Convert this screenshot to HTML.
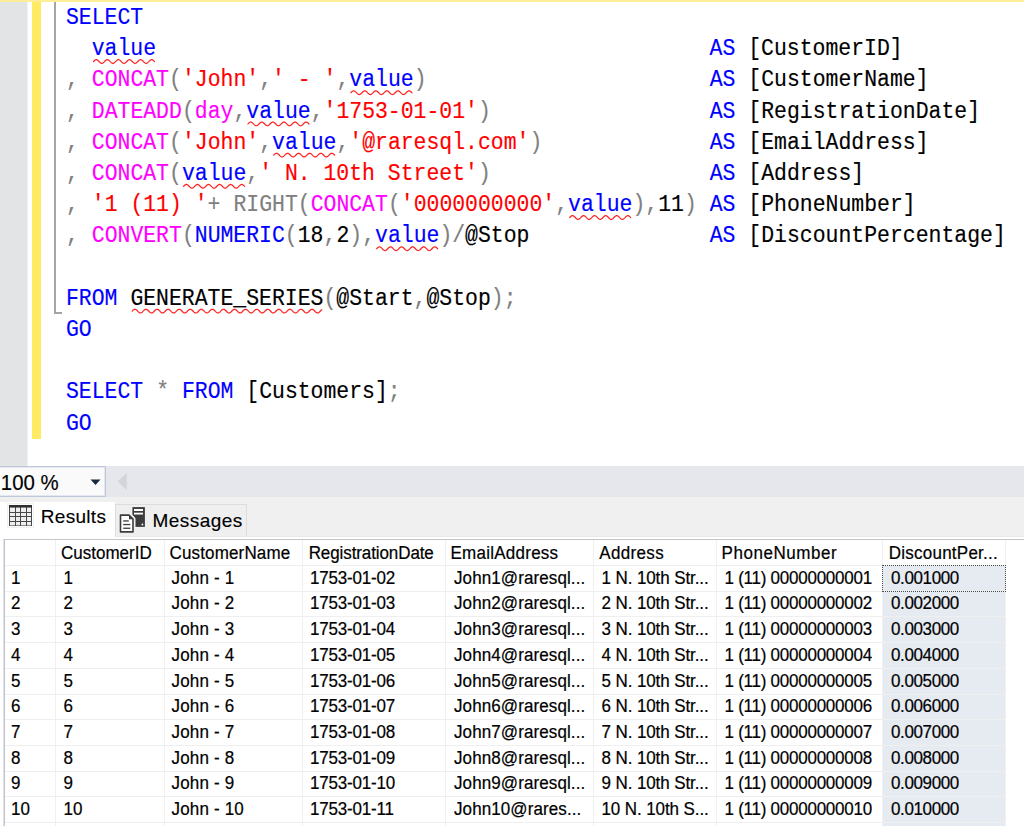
<!DOCTYPE html>
<html><head><meta charset="utf-8">
<style>
*{margin:0;padding:0;box-sizing:border-box}
html,body{width:1024px;height:826px;overflow:hidden;background:#fff}
body{position:relative;font-family:"Liberation Sans",sans-serif}
.abs{position:absolute}
#margin{left:0;top:0;width:27px;height:466px;background:#e3e4e6}
#topstrip{left:0;top:0;width:1024px;height:2px;background:#ffed97}
#ybar{left:32px;top:2px;width:9px;height:437px;background:#ffea64}
#vline{left:54px;top:2px;width:2px;height:312px;background:#a5a5a5}
#hline{left:54px;top:312px;width:8px;height:2px;background:#a5a5a5}
#code{left:66px;top:2.9px;font-family:"Liberation Mono",monospace;font-size:23px;line-height:31.2px;white-space:pre;color:#000;transform:scaleX(0.9326);transform-origin:0 0;-webkit-text-stroke:0.15px currentColor}
.k{color:#0000ff}.f{color:#ff00ff}.s{color:#ff0000}.g{color:#808080}


#band{left:0;top:466px;width:1024px;height:31px;background:#e6e7ec}
#zoombox{left:-1px;top:466px;width:107px;height:31px;background:#fafafa;border:1px solid #bfc8da;box-shadow:inset 0 1px 0 #e3e7ef,inset 0 -1px 0 #e3e7ef,inset -1px 0 0 #e3e7ef}
#zoomtxt{left:0.8px;top:470.6px;transform:scaleY(1.04);transform-origin:0 19px;-webkit-text-stroke:0.15px #000;font-size:20.4px;line-height:24px;color:#000}
#lower{left:0;top:497px;width:1024px;height:329px;background:#f0f0f0}
#restab{left:0;top:502px;width:115px;height:37px;background:#fff}
#msgtab{left:115px;top:504px;width:132px;height:33px;background:#efefef;border:1px solid #dcdcdc;border-bottom:none}
#gridbg{left:0px;top:537px;width:1024px;height:289px;background:#fff}
#restxt{left:40.8px;top:504.8px;-webkit-text-stroke:0.15px #000;font-size:19px;line-height:24px;letter-spacing:0.3px;color:#000}
#msgtxt{left:152.5px;top:508.5px;-webkit-text-stroke:0.15px #000;font-size:19px;line-height:24px;letter-spacing:0.45px;color:#000}
.gt{position:absolute;font-size:17px;line-height:20px;color:#000;white-space:pre;transform:scaleY(1.06);transform-origin:0 15.9px;-webkit-text-stroke:0.2px #000}
.vl{position:absolute;width:1px;background:#f0f0f0}
.hl{position:absolute;height:1px;background:#efefef}
</style></head><body>
<div id="margin" class="abs"></div>
<div class="abs" style="left:27px;top:2px;width:1px;height:464px;background:#f0f1f2"></div>
<div id="topstrip" class="abs"></div>
<div id="ybar" class="abs"></div>
<div id="vline" class="abs"></div>
<div id="hline" class="abs"></div>
<div id="code" class="abs"><span class="k">SELECT</span>
  <span class="k sq">value</span>                                           <span class="k">AS</span> [CustomerID]
<span class="g">,</span> <span class="f">CONCAT</span><span class="g">(</span><span class="s">'John'</span><span class="g">,</span><span class="s">' - '</span><span class="g">,</span><span class="k sq">value</span><span class="g">)</span>                      <span class="k">AS</span> [CustomerName]
<span class="g">,</span> <span class="f">DATEADD</span><span class="g">(</span><span class="f">day</span><span class="g">,</span><span class="k sq">value</span><span class="g">,</span><span class="s">'1753-01-01'</span><span class="g">)</span>                 <span class="k">AS</span> [RegistrationDate]
<span class="g">,</span> <span class="f">CONCAT</span><span class="g">(</span><span class="s">'John'</span><span class="g">,</span><span class="k sq">value</span><span class="g">,</span><span class="s">'@raresql.com'</span><span class="g">)</span>             <span class="k">AS</span> [EmailAddress]
<span class="g">,</span> <span class="f">CONCAT</span><span class="g">(</span><span class="k sq">value</span><span class="g">,</span><span class="s">' N. 10th Street'</span><span class="g">)</span>                 <span class="k">AS</span> [Address]
<span class="g">,</span> <span class="s">'1 (11) '</span><span class="g">+</span> <span class="g">RIGHT(</span><span class="f">CONCAT</span><span class="g">(</span><span class="s">'0000000000'</span><span class="g">,</span><span class="k sq">value</span><span class="g">),</span>11<span class="g">)</span> <span class="k">AS</span> [PhoneNumber]
<span class="g">,</span> <span class="f">CONVERT</span><span class="g">(</span><span class="k">NUMERIC</span><span class="g">(</span>18<span class="g">,</span>2<span class="g">),</span><span class="k sq">value</span><span class="g">)/</span>@Stop              <span class="k">AS</span> [DiscountPercentage]

<span class="k">FROM</span> <span class="sq">GENERATE_SERIES</span><span class="g">(</span>@Start<span class="g">,</span>@Stop<span class="g">);</span>
<span class="k">GO</span>

<span class="k">SELECT</span> <span class="g">*</span> <span class="k">FROM</span> [Customers]<span class="g">;</span>
<span class="k">GO</span></div>
<svg class="abs" style="left:0;top:0" width="1024" height="466"><g fill="none" stroke="#ff2424" stroke-width="1.25" stroke-linecap="round" stroke-linejoin="round"><polyline points="93.54,61.50 94.04,60.98 94.54,60.51 95.04,60.11 95.54,59.82 96.04,59.67 96.54,59.67 97.04,59.81 97.54,60.08 98.04,60.47 98.54,60.95 99.04,61.46 99.54,61.98 100.04,62.46 100.54,62.87 101.04,63.16 101.54,63.32 102.04,63.34 102.54,63.21 103.04,62.94 103.54,62.56 104.04,62.09 104.54,61.57 105.04,61.05 105.54,60.57 106.04,60.16 106.54,59.86 107.04,59.68 107.54,59.66 108.04,59.78 108.54,60.04 109.04,60.41 109.54,60.88 110.04,61.39 110.54,61.91 111.04,62.40 111.54,62.82 112.04,63.13 112.54,63.31 113.04,63.35 113.54,63.23 114.04,62.98 114.54,62.62 115.04,62.16 115.54,61.65 116.04,61.12 116.54,60.63 117.04,60.21 117.54,59.89 118.04,59.70 118.54,59.65 119.04,59.75 119.54,59.99 120.04,60.36 120.54,60.81 121.04,61.32 121.54,61.84 122.04,62.33 122.54,62.76 123.04,63.09 123.54,63.29 124.04,63.35 124.54,63.26 125.04,63.03 125.54,62.67 126.04,62.23 126.54,61.72 127.04,61.20 127.54,60.70 128.04,60.26 128.54,59.93 129.04,59.72 129.54,59.65 130.04,59.73 130.54,59.95 131.04,60.30 131.54,60.74 132.04,61.24 132.54,61.77 133.04,62.27 133.54,62.71 134.04,63.05 134.54,63.27 135.04,63.35 135.54,63.28 136.04,63.07 136.54,62.73 137.04,62.29 137.54,61.79 138.04,61.27 138.54,60.76 139.04,60.32 139.54,59.97 140.04,59.74 140.54,59.65 141.04,59.71 141.54,59.91 142.04,60.24 142.54,60.67 143.04,61.17 143.54,61.69 144.04,62.20 144.54,62.65 145.04,63.01 145.54,63.25 146.04,63.35 146.54,63.30 147.04,63.10 147.54,62.78 148.04,62.36 148.54,61.87 149.04,61.34 149.54,60.83 150.04,60.38 150.54,60.01 151.04,59.76 151.54,59.65 152.04,59.69 152.54,59.88 153.04,60.19 153.54,60.61 154.04,61.10 154.49,61.57"/><polyline points="350.94,92.70 351.44,92.18 351.94,91.71 352.44,91.31 352.94,91.02 353.44,90.87 353.94,90.87 354.44,91.01 354.94,91.28 355.44,91.67 355.94,92.15 356.44,92.66 356.94,93.18 357.44,93.66 357.94,94.07 358.44,94.36 358.94,94.52 359.44,94.54 359.94,94.41 360.44,94.14 360.94,93.76 361.44,93.29 361.94,92.77 362.44,92.25 362.94,91.77 363.44,91.36 363.94,91.06 364.44,90.88 364.94,90.86 365.44,90.98 365.94,91.24 366.44,91.61 366.94,92.08 367.44,92.59 367.94,93.11 368.44,93.60 368.94,94.02 369.44,94.33 369.94,94.51 370.44,94.55 370.94,94.43 371.44,94.18 371.94,93.82 372.44,93.36 372.94,92.85 373.44,92.32 373.94,91.83 374.44,91.41 374.94,91.09 375.44,90.90 375.94,90.85 376.44,90.95 376.94,91.19 377.44,91.56 377.94,92.01 378.44,92.52 378.94,93.04 379.44,93.53 379.94,93.96 380.44,94.29 380.94,94.49 381.44,94.55 381.94,94.46 382.44,94.23 382.94,93.87 383.44,93.43 383.94,92.92 384.44,92.40 384.94,91.90 385.44,91.46 385.94,91.13 386.44,90.92 386.94,90.85 387.44,90.93 387.94,91.15 388.44,91.50 388.94,91.94 389.44,92.44 389.94,92.97 390.44,93.47 390.94,93.91 391.44,94.25 391.94,94.47 392.44,94.55 392.94,94.48 393.44,94.27 393.94,93.93 394.44,93.49 394.94,92.99 395.44,92.47 395.94,91.96 396.44,91.52 396.94,91.17 397.44,90.94 397.94,90.85 398.44,90.91 398.94,91.11 399.44,91.44 399.94,91.87 400.44,92.37 400.94,92.89 401.44,93.40 401.94,93.85 402.44,94.21 402.94,94.45 403.44,94.55 403.94,94.50 404.44,94.30 404.94,93.98 405.44,93.56 405.94,93.07 406.44,92.54 406.94,92.03 407.44,91.58 407.94,91.21 408.44,90.96 408.94,90.85 409.44,90.89 409.94,91.08 410.44,91.39 410.94,91.81 411.44,92.30 411.89,92.77"/><polyline points="247.98,123.90 248.48,123.38 248.98,122.91 249.48,122.51 249.98,122.22 250.48,122.07 250.98,122.07 251.48,122.21 251.98,122.48 252.48,122.87 252.98,123.35 253.48,123.86 253.98,124.38 254.48,124.86 254.98,125.27 255.48,125.56 255.98,125.72 256.48,125.74 256.98,125.61 257.48,125.34 257.98,124.96 258.48,124.49 258.98,123.97 259.48,123.45 259.98,122.97 260.48,122.56 260.98,122.26 261.48,122.08 261.98,122.06 262.48,122.18 262.98,122.44 263.48,122.81 263.98,123.28 264.48,123.79 264.98,124.31 265.48,124.80 265.98,125.22 266.48,125.53 266.98,125.71 267.48,125.75 267.98,125.63 268.48,125.38 268.98,125.02 269.48,124.56 269.98,124.05 270.48,123.52 270.98,123.03 271.48,122.61 271.98,122.29 272.48,122.10 272.98,122.05 273.48,122.15 273.98,122.39 274.48,122.76 274.98,123.21 275.48,123.72 275.98,124.24 276.48,124.73 276.98,125.16 277.48,125.49 277.98,125.69 278.48,125.75 278.98,125.66 279.48,125.43 279.98,125.07 280.48,124.63 280.98,124.12 281.48,123.60 281.98,123.10 282.48,122.66 282.98,122.33 283.48,122.12 283.98,122.05 284.48,122.13 284.98,122.35 285.48,122.70 285.98,123.14 286.48,123.64 286.98,124.17 287.48,124.67 287.98,125.11 288.48,125.45 288.98,125.67 289.48,125.75 289.98,125.68 290.48,125.47 290.98,125.13 291.48,124.69 291.98,124.19 292.48,123.67 292.98,123.16 293.48,122.72 293.98,122.37 294.48,122.14 294.98,122.05 295.48,122.11 295.98,122.31 296.48,122.64 296.98,123.07 297.48,123.57 297.98,124.09 298.48,124.60 298.98,125.05 299.48,125.41 299.98,125.65 300.48,125.75 300.98,125.70 301.48,125.50 301.98,125.18 302.48,124.76 302.98,124.27 303.48,123.74 303.98,123.23 304.48,122.78 304.98,122.41 305.48,122.16 305.98,122.05 306.48,122.09 306.98,122.28 307.48,122.59 307.98,123.01 308.48,123.50 308.93,123.97"/><polyline points="273.72,155.10 274.22,154.58 274.72,154.11 275.22,153.71 275.72,153.42 276.22,153.27 276.72,153.27 277.22,153.41 277.72,153.68 278.22,154.07 278.72,154.55 279.22,155.06 279.72,155.58 280.22,156.06 280.72,156.47 281.22,156.76 281.72,156.92 282.22,156.94 282.72,156.81 283.22,156.54 283.72,156.16 284.22,155.69 284.72,155.17 285.22,154.65 285.72,154.17 286.22,153.76 286.72,153.46 287.22,153.28 287.72,153.26 288.22,153.38 288.72,153.64 289.22,154.01 289.72,154.48 290.22,154.99 290.72,155.51 291.22,156.00 291.72,156.42 292.22,156.73 292.72,156.91 293.22,156.95 293.72,156.83 294.22,156.58 294.72,156.22 295.22,155.76 295.72,155.25 296.22,154.72 296.72,154.23 297.22,153.81 297.72,153.49 298.22,153.30 298.72,153.25 299.22,153.35 299.72,153.59 300.22,153.96 300.72,154.41 301.22,154.92 301.72,155.44 302.22,155.93 302.72,156.36 303.22,156.69 303.72,156.89 304.22,156.95 304.72,156.86 305.22,156.63 305.72,156.27 306.22,155.83 306.72,155.32 307.22,154.80 307.72,154.30 308.22,153.86 308.72,153.53 309.22,153.32 309.72,153.25 310.22,153.33 310.72,153.55 311.22,153.90 311.72,154.34 312.22,154.84 312.72,155.37 313.22,155.87 313.72,156.31 314.22,156.65 314.72,156.87 315.22,156.95 315.72,156.88 316.22,156.67 316.72,156.33 317.22,155.89 317.72,155.39 318.22,154.87 318.72,154.36 319.22,153.92 319.72,153.57 320.22,153.34 320.72,153.25 321.22,153.31 321.72,153.51 322.22,153.84 322.72,154.27 323.22,154.77 323.72,155.29 324.22,155.80 324.72,156.25 325.22,156.61 325.72,156.85 326.22,156.95 326.72,156.90 327.22,156.70 327.72,156.38 328.22,155.96 328.72,155.47 329.22,154.94 329.72,154.43 330.22,153.98 330.72,153.61 331.22,153.36 331.72,153.25 332.22,153.29 332.72,153.48 333.22,153.79 333.72,154.21 334.22,154.70 334.67,155.17"/><polyline points="183.63,186.30 184.13,185.78 184.63,185.31 185.13,184.91 185.63,184.62 186.13,184.47 186.63,184.47 187.13,184.61 187.63,184.88 188.13,185.27 188.63,185.75 189.13,186.26 189.63,186.78 190.13,187.26 190.63,187.67 191.13,187.96 191.63,188.12 192.13,188.14 192.63,188.01 193.13,187.74 193.63,187.36 194.13,186.89 194.63,186.37 195.13,185.85 195.63,185.37 196.13,184.96 196.63,184.66 197.13,184.48 197.63,184.46 198.13,184.58 198.63,184.84 199.13,185.21 199.63,185.68 200.13,186.19 200.63,186.71 201.13,187.20 201.63,187.62 202.13,187.93 202.63,188.11 203.13,188.15 203.63,188.03 204.13,187.78 204.63,187.42 205.13,186.96 205.63,186.45 206.13,185.92 206.63,185.43 207.13,185.01 207.63,184.69 208.13,184.50 208.63,184.45 209.13,184.55 209.63,184.79 210.13,185.16 210.63,185.61 211.13,186.12 211.63,186.64 212.13,187.13 212.63,187.56 213.13,187.89 213.63,188.09 214.13,188.15 214.63,188.06 215.13,187.83 215.63,187.47 216.13,187.03 216.63,186.52 217.13,186.00 217.63,185.50 218.13,185.06 218.63,184.73 219.13,184.52 219.63,184.45 220.13,184.53 220.63,184.75 221.13,185.10 221.63,185.54 222.13,186.04 222.63,186.57 223.13,187.07 223.63,187.51 224.13,187.85 224.63,188.07 225.13,188.15 225.63,188.08 226.13,187.87 226.63,187.53 227.13,187.09 227.63,186.59 228.13,186.07 228.63,185.56 229.13,185.12 229.63,184.77 230.13,184.54 230.63,184.45 231.13,184.51 231.63,184.71 232.13,185.04 232.63,185.47 233.13,185.97 233.63,186.49 234.13,187.00 234.63,187.45 235.13,187.81 235.63,188.05 236.13,188.15 236.63,188.10 237.13,187.90 237.63,187.58 238.13,187.16 238.63,186.67 239.13,186.14 239.63,185.63 240.13,185.18 240.63,184.81 241.13,184.56 241.63,184.45 242.13,184.49 242.63,184.68 243.13,184.99 243.63,185.41 244.13,185.90 244.58,186.37"/><polyline points="569.73,217.50 570.23,216.98 570.73,216.51 571.23,216.11 571.73,215.82 572.23,215.67 572.73,215.67 573.23,215.81 573.73,216.08 574.23,216.47 574.73,216.95 575.23,217.46 575.73,217.98 576.23,218.46 576.73,218.87 577.23,219.16 577.73,219.32 578.23,219.34 578.73,219.21 579.23,218.94 579.73,218.56 580.23,218.09 580.73,217.57 581.23,217.05 581.73,216.57 582.23,216.16 582.73,215.86 583.23,215.68 583.73,215.66 584.23,215.78 584.73,216.04 585.23,216.41 585.73,216.88 586.23,217.39 586.73,217.91 587.23,218.40 587.73,218.82 588.23,219.13 588.73,219.31 589.23,219.35 589.73,219.23 590.23,218.98 590.73,218.62 591.23,218.16 591.73,217.65 592.23,217.12 592.73,216.63 593.23,216.21 593.73,215.89 594.23,215.70 594.73,215.65 595.23,215.75 595.73,215.99 596.23,216.36 596.73,216.81 597.23,217.32 597.73,217.84 598.23,218.33 598.73,218.76 599.23,219.09 599.73,219.29 600.23,219.35 600.73,219.26 601.23,219.03 601.73,218.67 602.23,218.23 602.73,217.72 603.23,217.20 603.73,216.70 604.23,216.26 604.73,215.93 605.23,215.72 605.73,215.65 606.23,215.73 606.73,215.95 607.23,216.30 607.73,216.74 608.23,217.24 608.73,217.77 609.23,218.27 609.73,218.71 610.23,219.05 610.73,219.27 611.23,219.35 611.73,219.28 612.23,219.07 612.73,218.73 613.23,218.29 613.73,217.79 614.23,217.27 614.73,216.76 615.23,216.32 615.73,215.97 616.23,215.74 616.73,215.65 617.23,215.71 617.73,215.91 618.23,216.24 618.73,216.67 619.23,217.17 619.73,217.69 620.23,218.20 620.73,218.65 621.23,219.01 621.73,219.25 622.23,219.35 622.73,219.30 623.23,219.10 623.73,218.78 624.23,218.36 624.73,217.87 625.23,217.34 625.73,216.83 626.23,216.38 626.73,216.01 627.23,215.76 627.73,215.65 628.23,215.69 628.73,215.88 629.23,216.19 629.73,216.61 630.23,217.10 630.68,217.57"/><polyline points="376.68,248.70 377.18,248.18 377.68,247.71 378.18,247.31 378.68,247.02 379.18,246.87 379.68,246.87 380.18,247.01 380.68,247.28 381.18,247.67 381.68,248.15 382.18,248.66 382.68,249.18 383.18,249.66 383.68,250.07 384.18,250.36 384.68,250.52 385.18,250.54 385.68,250.41 386.18,250.14 386.68,249.76 387.18,249.29 387.68,248.77 388.18,248.25 388.68,247.77 389.18,247.36 389.68,247.06 390.18,246.88 390.68,246.86 391.18,246.98 391.68,247.24 392.18,247.61 392.68,248.08 393.18,248.59 393.68,249.11 394.18,249.60 394.68,250.02 395.18,250.33 395.68,250.51 396.18,250.55 396.68,250.43 397.18,250.18 397.68,249.82 398.18,249.36 398.68,248.85 399.18,248.32 399.68,247.83 400.18,247.41 400.68,247.09 401.18,246.90 401.68,246.85 402.18,246.95 402.68,247.19 403.18,247.56 403.68,248.01 404.18,248.52 404.68,249.04 405.18,249.53 405.68,249.96 406.18,250.29 406.68,250.49 407.18,250.55 407.68,250.46 408.18,250.23 408.68,249.87 409.18,249.43 409.68,248.92 410.18,248.40 410.68,247.90 411.18,247.46 411.68,247.13 412.18,246.92 412.68,246.85 413.18,246.93 413.68,247.15 414.18,247.50 414.68,247.94 415.18,248.44 415.68,248.97 416.18,249.47 416.68,249.91 417.18,250.25 417.68,250.47 418.18,250.55 418.68,250.48 419.18,250.27 419.68,249.93 420.18,249.49 420.68,248.99 421.18,248.47 421.68,247.96 422.18,247.52 422.68,247.17 423.18,246.94 423.68,246.85 424.18,246.91 424.68,247.11 425.18,247.44 425.68,247.87 426.18,248.37 426.68,248.89 427.18,249.40 427.68,249.85 428.18,250.21 428.68,250.45 429.18,250.55 429.68,250.50 430.18,250.30 430.68,249.98 431.18,249.56 431.68,249.07 432.18,248.54 432.68,248.03 433.18,247.58 433.68,247.21 434.18,246.96 434.68,246.85 435.18,246.89 435.68,247.08 436.18,247.39 436.68,247.81 437.18,248.30 437.63,248.77"/><polyline points="132.15,311.10 132.65,310.58 133.15,310.11 133.65,309.71 134.15,309.42 134.65,309.27 135.15,309.27 135.65,309.41 136.15,309.68 136.65,310.07 137.15,310.55 137.65,311.06 138.15,311.58 138.65,312.06 139.15,312.47 139.65,312.76 140.15,312.92 140.65,312.94 141.15,312.81 141.65,312.54 142.15,312.16 142.65,311.69 143.15,311.17 143.65,310.65 144.15,310.17 144.65,309.76 145.15,309.46 145.65,309.28 146.15,309.26 146.65,309.38 147.15,309.64 147.65,310.01 148.15,310.48 148.65,310.99 149.15,311.51 149.65,312.00 150.15,312.42 150.65,312.73 151.15,312.91 151.65,312.95 152.15,312.83 152.65,312.58 153.15,312.22 153.65,311.76 154.15,311.25 154.65,310.72 155.15,310.23 155.65,309.81 156.15,309.49 156.65,309.30 157.15,309.25 157.65,309.35 158.15,309.59 158.65,309.96 159.15,310.41 159.65,310.92 160.15,311.44 160.65,311.93 161.15,312.36 161.65,312.69 162.15,312.89 162.65,312.95 163.15,312.86 163.65,312.63 164.15,312.27 164.65,311.83 165.15,311.32 165.65,310.80 166.15,310.30 166.65,309.86 167.15,309.53 167.65,309.32 168.15,309.25 168.65,309.33 169.15,309.55 169.65,309.90 170.15,310.34 170.65,310.84 171.15,311.37 171.65,311.87 172.15,312.31 172.65,312.65 173.15,312.87 173.65,312.95 174.15,312.88 174.65,312.67 175.15,312.33 175.65,311.89 176.15,311.39 176.65,310.87 177.15,310.36 177.65,309.92 178.15,309.57 178.65,309.34 179.15,309.25 179.65,309.31 180.15,309.51 180.65,309.84 181.15,310.27 181.65,310.77 182.15,311.29 182.65,311.80 183.15,312.25 183.65,312.61 184.15,312.85 184.65,312.95 185.15,312.90 185.65,312.70 186.15,312.38 186.65,311.96 187.15,311.47 187.65,310.94 188.15,310.43 188.65,309.98 189.15,309.61 189.65,309.36 190.15,309.25 190.65,309.29 191.15,309.48 191.65,309.79 192.15,310.21 192.65,310.70 193.15,311.22 193.65,311.73 194.15,312.19 194.65,312.57 195.15,312.82 195.65,312.94 196.15,312.91 196.65,312.74 197.15,312.43 197.65,312.02 198.15,311.54 198.65,311.02 199.15,310.50 199.65,310.04 200.15,309.65 200.65,309.39 201.15,309.26 201.65,309.28 202.15,309.44 202.65,309.74 203.15,310.15 203.65,310.63 204.15,311.15 204.65,311.66 205.15,312.13 205.65,312.52 206.15,312.80 206.65,312.94 207.15,312.93 207.65,312.77 208.15,312.48 208.65,312.09 209.15,311.61 209.65,311.09 210.15,310.57 210.65,310.10 211.15,309.70 211.65,309.42 212.15,309.27 212.65,309.27 213.15,309.41 213.65,309.69 214.15,310.08 214.65,310.56 215.15,311.07 215.65,311.59 216.15,312.07 216.65,312.47 217.15,312.77 217.65,312.92 218.15,312.94 218.65,312.80 219.15,312.53 219.65,312.15 220.15,311.68 220.65,311.16 221.15,310.64 221.65,310.16 222.15,309.75 222.65,309.45 223.15,309.28 223.65,309.26 224.15,309.38 224.65,309.64 225.15,310.02 225.65,310.49 226.15,311.00 226.65,311.52 227.15,312.01 227.65,312.42 228.15,312.73 228.65,312.91 229.15,312.94 229.65,312.83 230.15,312.58 230.65,312.21 231.15,311.75 231.65,311.24 232.15,310.71 232.65,310.22 233.15,309.80 233.65,309.48 234.15,309.30 234.65,309.25 235.15,309.36 235.65,309.60 236.15,309.96 236.65,310.42 237.15,310.93 237.65,311.45 238.15,311.94 238.65,312.37 239.15,312.70 239.65,312.89 240.15,312.95 240.65,312.85 241.15,312.62 241.65,312.26 242.15,311.82 242.65,311.31 243.15,310.79 243.65,310.29 244.15,309.86 244.65,309.52 245.15,309.31 245.65,309.25 246.15,309.33 246.65,309.56 247.15,309.91 247.65,310.35 248.15,310.85 248.65,311.38 249.15,311.88 249.65,312.32 250.15,312.66 250.65,312.88 251.15,312.95 251.65,312.88 252.15,312.66 252.65,312.32 253.15,311.88 253.65,311.38 254.15,310.86 254.65,310.36 255.15,309.91 255.65,309.56 256.15,309.34 256.65,309.25 257.15,309.31 257.65,309.52 258.15,309.85 258.65,310.28 259.15,310.78 259.65,311.30 260.15,311.81 260.65,312.26 261.15,312.62 261.65,312.85 262.15,312.95 262.65,312.90 263.15,312.70 263.65,312.38 264.15,311.95 264.65,311.45 265.15,310.93 265.65,310.42 266.15,309.97 266.65,309.60 267.15,309.36 267.65,309.25 268.15,309.30 268.65,309.48 269.15,309.80 269.65,310.22 270.15,310.71 270.65,311.23 271.15,311.74 271.65,312.20 272.15,312.57 272.65,312.83 273.15,312.94 273.65,312.91 274.15,312.74 274.65,312.43 275.15,312.01 275.65,311.53 276.15,311.01 276.65,310.49 277.15,310.03 277.65,309.65 278.15,309.39 278.65,309.26 279.15,309.28 279.65,309.45 280.15,309.75 280.65,310.15 281.15,310.64 281.65,311.16 282.15,311.67 282.65,312.14 283.15,312.53 283.65,312.80 284.15,312.94 284.65,312.93 285.15,312.77 285.65,312.48 286.15,312.08 286.65,311.60 287.15,311.08 287.65,310.56 288.15,310.09 288.65,309.69 289.15,309.41 289.65,309.27 290.15,309.27 290.65,309.42 291.15,309.70 291.65,310.09 292.15,310.57 292.65,311.08 293.15,311.60 293.65,312.08 294.15,312.48 294.65,312.77 295.15,312.93 295.65,312.94 296.15,312.80 296.65,312.53 297.15,312.14 297.65,311.67 298.15,311.15 298.65,310.63 299.15,310.15 299.65,309.74 300.15,309.45 300.65,309.28 301.15,309.26 301.65,309.39 302.15,309.65 302.65,310.03 303.15,310.50 303.65,311.01 304.15,311.53 304.65,312.02 305.15,312.43 305.65,312.74 306.15,312.91 306.65,312.94 307.15,312.83 307.65,312.57 308.15,312.20 308.65,311.74 309.15,311.23 309.65,310.70 310.15,310.21 310.65,309.79 311.15,309.48 311.65,309.29 312.15,309.25 312.65,309.36 313.15,309.61 313.65,309.97 314.15,310.43 314.65,310.94 315.15,311.46 315.65,311.95 316.15,312.38 316.65,312.70 317.15,312.90 317.65,312.95 318.15,312.85 318.65,312.61 319.15,312.26 319.65,311.81 320.15,311.30 320.65,310.78 321.15,310.28 321.65,309.85 321.80,309.74"/></g></svg>
<div id="band" class="abs"></div>
<div id="zoombox" class="abs"></div>
<div id="zoomtxt" class="abs">100 %</div>
<svg class="abs" style="left:90px;top:479px" width="11" height="7"><path d="M0.5 0.5 L10.5 0.5 L5.5 6 Z" fill="#1b293e"/></svg>
<div id="lower" class="abs"></div>
<div id="restab" class="abs"></div>
<div id="msgtab" class="abs"></div>
<div id="gridbg" class="abs"></div>
<div class="abs" style="left:7px;top:503px;width:27px;height:25px;border:1px solid #f1f1f1"></div>
<svg class="abs" style="left:9px;top:505px" width="23" height="21" viewBox="0 0 23 21">
<rect x="0" y="0" width="23" height="21.4" fill="#474747"/>
<rect x="0" y="0" width="23" height="2.6" fill="#2e2e2e"/>
<g fill="#efefef"><rect x="1" y="2.6" width="5" height="4.4"/><rect x="7" y="2.6" width="4" height="4.4"/><rect x="12" y="2.6" width="5" height="4.4"/><rect x="18" y="2.6" width="4" height="4.4"/>
<rect x="1" y="8" width="5" height="3"/><rect x="7" y="8" width="4" height="3"/><rect x="12" y="8" width="5" height="3"/><rect x="18" y="8" width="4" height="3"/>
<rect x="1" y="12" width="5" height="4"/><rect x="7" y="12" width="4" height="4"/><rect x="12" y="12" width="5" height="4"/><rect x="18" y="12" width="4" height="4"/>
<rect x="1" y="17" width="5" height="3.4"/><rect x="7" y="17" width="4" height="3.4"/><rect x="12" y="17" width="5" height="3.4"/><rect x="18" y="17" width="4" height="3.4"/></g>
</svg>
<svg class="abs" style="left:116px;top:504px" width="32" height="32" viewBox="0 0 32 32">
<rect x="16.4" y="3.1" width="12.5" height="19.8" fill="#3c3c3c"/>
<rect x="18" y="5" width="9" height="2" fill="#fff"/><rect x="18" y="8.7" width="9" height="1.8" fill="#fff"/>
<circle cx="26.4" cy="20.5" r="0.9" fill="#fff"/>
<path d="M4.5 11.1 H13 L17 15.1 V27.9 H4.5 Z" fill="#efefef" stroke="#efefef" stroke-width="5" stroke-linejoin="round"/>
<path d="M4.5 11.1 H13 L17 15.1 V27.9 H4.5 Z" fill="#fff" stroke="#3c3c3c" stroke-width="1.6" stroke-linejoin="round"/>
<path d="M13 11 L17.2 15.3 H13 Z" fill="#3c3c3c"/>
<rect x="7.2" y="16.3" width="5.6" height="1.3" fill="#3c3c3c"/><rect x="7.2" y="19.9" width="7.1" height="1.3" fill="#3c3c3c"/><rect x="7.2" y="23.6" width="7.1" height="1.3" fill="#3c3c3c"/>
</svg>
<svg class="abs" style="left:117px;top:473px" width="11" height="18" viewBox="0 0 11 18"><path d="M0.5 8.5 L9.8 0 V17 Z" fill="#d3d5db"/></svg>
<div id="restxt" class="abs">Results</div>
<div id="msgtxt" class="abs">Messages</div>
<!--GRID-->
<div class="abs" style="left:883px;top:566.0px;width:123px;height:261.0px;background:#e6ebf1"></div>
<div class="abs" style="left:115px;top:536px;width:909px;height:1px;background:#e9e9e9"></div>
<div class="abs" style="left:0px;top:537px;width:1024px;height:2px;background:#fff"></div>
<div class="abs" style="left:4px;top:539px;width:1020px;height:1px;background:#c5c6cc"></div>
<div class="abs" style="left:3px;top:539px;width:1px;height:287px;background:#e0e1e6"></div>
<div class="abs" style="left:4px;top:539px;width:1px;height:287px;background:#c2c4cc"></div>
<div class="vl" style="left:55px;top:540px;height:286px"></div>
<div class="vl" style="left:164px;top:540px;height:286px"></div>
<div class="vl" style="left:302px;top:540px;height:286px"></div>
<div class="vl" style="left:445px;top:540px;height:286px"></div>
<div class="vl" style="left:593px;top:540px;height:286px"></div>
<div class="vl" style="left:716px;top:540px;height:286px"></div>
<div class="vl" style="left:882px;top:540px;height:286px"></div>
<div class="vl" style="left:1005px;top:540px;height:286px"></div>
<div class="hl" style="left:5px;top:565px;width:1000px"></div>
<div class="hl" style="left:5px;top:591px;width:1000px"></div>
<div class="hl" style="left:5px;top:616px;width:1000px"></div>
<div class="hl" style="left:5px;top:642px;width:1000px"></div>
<div class="hl" style="left:5px;top:668px;width:1000px"></div>
<div class="hl" style="left:5px;top:694px;width:1000px"></div>
<div class="hl" style="left:5px;top:719px;width:1000px"></div>
<div class="hl" style="left:5px;top:745px;width:1000px"></div>
<div class="hl" style="left:5px;top:771px;width:1000px"></div>
<div class="hl" style="left:5px;top:796px;width:1000px"></div>
<div class="hl" style="left:5px;top:822px;width:1000px"></div>
<div class="abs" style="left:882px;top:565px;width:124px;height:27px;border:1px dotted #4a4a4a"></div>
<div class="gt" style="left:61px;top:543.90px">CustomerID</div>
<div class="gt" style="left:169.5px;top:543.90px;letter-spacing:0.15px">CustomerName</div>
<div class="gt" style="left:308.7px;top:543.90px;letter-spacing:-0.1px">RegistrationDate</div>
<div class="gt" style="left:450.5px;top:543.90px;letter-spacing:0.25px">EmailAddress</div>
<div class="gt" style="left:599.2px;top:543.90px;letter-spacing:0.35px">Address</div>
<div class="gt" style="left:721.5px;top:543.90px;letter-spacing:0.55px">PhoneNumber</div>
<div class="gt" style="left:888.7px;top:543.90px;letter-spacing:0.25px">DiscountPer...</div>
<div class="gt" style="left:11px;top:568.70px">1</div>
<div class="gt" style="left:63.5px;top:568.70px">1</div>
<div class="gt" style="left:171.5px;top:568.70px;letter-spacing:0.17px">John - 1</div>
<div class="gt" style="left:310px;top:568.70px;letter-spacing:-0.2px">1753-01-02</div>
<div class="gt" style="left:454px;top:568.70px;letter-spacing:0.1px">John1@raresql...</div>
<div class="gt" style="left:601.5px;top:568.70px;letter-spacing:-0.1px">1 N. 10th Str...</div>
<div class="gt" style="left:724.5px;top:568.70px;letter-spacing:-0.25px">1 (11) 00000000001</div>
<div class="gt" style="left:891px;top:568.70px;letter-spacing:-0.37px">0.001000</div>
<div class="gt" style="left:11px;top:594.40px">2</div>
<div class="gt" style="left:63.5px;top:594.40px">2</div>
<div class="gt" style="left:171.5px;top:594.40px;letter-spacing:0.17px">John - 2</div>
<div class="gt" style="left:310px;top:594.40px;letter-spacing:-0.2px">1753-01-03</div>
<div class="gt" style="left:454px;top:594.40px;letter-spacing:0.1px">John2@raresql...</div>
<div class="gt" style="left:601.5px;top:594.40px;letter-spacing:-0.1px">2 N. 10th Str...</div>
<div class="gt" style="left:724.5px;top:594.40px;letter-spacing:-0.25px">1 (11) 00000000002</div>
<div class="gt" style="left:891px;top:594.40px;letter-spacing:-0.37px">0.002000</div>
<div class="gt" style="left:11px;top:620.10px">3</div>
<div class="gt" style="left:63.5px;top:620.10px">3</div>
<div class="gt" style="left:171.5px;top:620.10px;letter-spacing:0.17px">John - 3</div>
<div class="gt" style="left:310px;top:620.10px;letter-spacing:-0.2px">1753-01-04</div>
<div class="gt" style="left:454px;top:620.10px;letter-spacing:0.1px">John3@raresql...</div>
<div class="gt" style="left:601.5px;top:620.10px;letter-spacing:-0.1px">3 N. 10th Str...</div>
<div class="gt" style="left:724.5px;top:620.10px;letter-spacing:-0.25px">1 (11) 00000000003</div>
<div class="gt" style="left:891px;top:620.10px;letter-spacing:-0.37px">0.003000</div>
<div class="gt" style="left:11px;top:645.80px">4</div>
<div class="gt" style="left:63.5px;top:645.80px">4</div>
<div class="gt" style="left:171.5px;top:645.80px;letter-spacing:0.17px">John - 4</div>
<div class="gt" style="left:310px;top:645.80px;letter-spacing:-0.2px">1753-01-05</div>
<div class="gt" style="left:454px;top:645.80px;letter-spacing:0.1px">John4@raresql...</div>
<div class="gt" style="left:601.5px;top:645.80px;letter-spacing:-0.1px">4 N. 10th Str...</div>
<div class="gt" style="left:724.5px;top:645.80px;letter-spacing:-0.25px">1 (11) 00000000004</div>
<div class="gt" style="left:891px;top:645.80px;letter-spacing:-0.37px">0.004000</div>
<div class="gt" style="left:11px;top:671.50px">5</div>
<div class="gt" style="left:63.5px;top:671.50px">5</div>
<div class="gt" style="left:171.5px;top:671.50px;letter-spacing:0.17px">John - 5</div>
<div class="gt" style="left:310px;top:671.50px;letter-spacing:-0.2px">1753-01-06</div>
<div class="gt" style="left:454px;top:671.50px;letter-spacing:0.1px">John5@raresql...</div>
<div class="gt" style="left:601.5px;top:671.50px;letter-spacing:-0.1px">5 N. 10th Str...</div>
<div class="gt" style="left:724.5px;top:671.50px;letter-spacing:-0.25px">1 (11) 00000000005</div>
<div class="gt" style="left:891px;top:671.50px;letter-spacing:-0.37px">0.005000</div>
<div class="gt" style="left:11px;top:697.20px">6</div>
<div class="gt" style="left:63.5px;top:697.20px">6</div>
<div class="gt" style="left:171.5px;top:697.20px;letter-spacing:0.17px">John - 6</div>
<div class="gt" style="left:310px;top:697.20px;letter-spacing:-0.2px">1753-01-07</div>
<div class="gt" style="left:454px;top:697.20px;letter-spacing:0.1px">John6@raresql...</div>
<div class="gt" style="left:601.5px;top:697.20px;letter-spacing:-0.1px">6 N. 10th Str...</div>
<div class="gt" style="left:724.5px;top:697.20px;letter-spacing:-0.25px">1 (11) 00000000006</div>
<div class="gt" style="left:891px;top:697.20px;letter-spacing:-0.37px">0.006000</div>
<div class="gt" style="left:11px;top:722.90px">7</div>
<div class="gt" style="left:63.5px;top:722.90px">7</div>
<div class="gt" style="left:171.5px;top:722.90px;letter-spacing:0.17px">John - 7</div>
<div class="gt" style="left:310px;top:722.90px;letter-spacing:-0.2px">1753-01-08</div>
<div class="gt" style="left:454px;top:722.90px;letter-spacing:0.1px">John7@raresql...</div>
<div class="gt" style="left:601.5px;top:722.90px;letter-spacing:-0.1px">7 N. 10th Str...</div>
<div class="gt" style="left:724.5px;top:722.90px;letter-spacing:-0.25px">1 (11) 00000000007</div>
<div class="gt" style="left:891px;top:722.90px;letter-spacing:-0.37px">0.007000</div>
<div class="gt" style="left:11px;top:748.60px">8</div>
<div class="gt" style="left:63.5px;top:748.60px">8</div>
<div class="gt" style="left:171.5px;top:748.60px;letter-spacing:0.17px">John - 8</div>
<div class="gt" style="left:310px;top:748.60px;letter-spacing:-0.2px">1753-01-09</div>
<div class="gt" style="left:454px;top:748.60px;letter-spacing:0.1px">John8@raresql...</div>
<div class="gt" style="left:601.5px;top:748.60px;letter-spacing:-0.1px">8 N. 10th Str...</div>
<div class="gt" style="left:724.5px;top:748.60px;letter-spacing:-0.25px">1 (11) 00000000008</div>
<div class="gt" style="left:891px;top:748.60px;letter-spacing:-0.37px">0.008000</div>
<div class="gt" style="left:11px;top:774.30px">9</div>
<div class="gt" style="left:63.5px;top:774.30px">9</div>
<div class="gt" style="left:171.5px;top:774.30px;letter-spacing:0.17px">John - 9</div>
<div class="gt" style="left:310px;top:774.30px;letter-spacing:-0.2px">1753-01-10</div>
<div class="gt" style="left:454px;top:774.30px;letter-spacing:0.1px">John9@raresql...</div>
<div class="gt" style="left:601.5px;top:774.30px;letter-spacing:-0.1px">9 N. 10th Str...</div>
<div class="gt" style="left:724.5px;top:774.30px;letter-spacing:-0.25px">1 (11) 00000000009</div>
<div class="gt" style="left:891px;top:774.30px;letter-spacing:-0.37px">0.009000</div>
<div class="gt" style="left:11px;top:800.00px">10</div>
<div class="gt" style="left:63.5px;top:800.00px">10</div>
<div class="gt" style="left:171.5px;top:800.00px;letter-spacing:0.17px">John - 10</div>
<div class="gt" style="left:310px;top:800.00px;letter-spacing:-0.2px">1753-01-11</div>
<div class="gt" style="left:454px;top:800.00px;letter-spacing:0.1px">John10@rares...</div>
<div class="gt" style="left:601.5px;top:800.00px;letter-spacing:-0.1px">10 N. 10th S...</div>
<div class="gt" style="left:724.5px;top:800.00px;letter-spacing:-0.25px">1 (11) 00000000010</div>
<div class="gt" style="left:891px;top:800.00px;letter-spacing:-0.37px">0.010000</div>
<!--/GRID-->
</body></html>
